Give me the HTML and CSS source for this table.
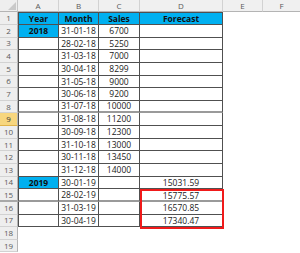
FILE: index.html
```html
<!DOCTYPE html>
<html>
<head>
<meta charset="utf-8">
<link rel="stylesheet" href="styles.css">
</head>
<body>
<div class="wrap">
<div class="sheet">
  <div class="corner"><svg class="tri" width="8" height="8" viewBox="0 0 8 8"><polygon points="8,0 8,8 0,8" fill="#c9c9c9"/></svg></div>
  <div class="ch">A</div><div class="ch">B</div><div class="ch">C</div><div class="ch">D</div><div class="ch">E</div><div class="ch last">F</div>

  <div class="rh">1</div>
  <div class="c b bl bt cy bold">Year</div><div class="c b bt cy bold">Month</div><div class="c b bt cy bold">Sales</div><div class="c b bt cy bold">Forecast</div><div class="c"></div><div class="c"></div>

  <div class="rh">2</div>
  <div class="c b bl cy bold">2018</div><div class="c b">31-01-18</div><div class="c b">6700</div><div class="c b"></div><div class="c"></div><div class="c"></div>

  <div class="rh">3</div>
  <div class="c b bl"></div><div class="c b">28-02-18</div><div class="c b">5250</div><div class="c b"></div><div class="c"></div><div class="c"></div>

  <div class="rh">4</div>
  <div class="c b bl"></div><div class="c b">31-03-18</div><div class="c b">7000</div><div class="c b"></div><div class="c"></div><div class="c"></div>

  <div class="rh">5</div>
  <div class="c b bl"></div><div class="c b">30-04-18</div><div class="c b">8299</div><div class="c b"></div><div class="c"></div><div class="c"></div>

  <div class="rh">6</div>
  <div class="c b bl"></div><div class="c b">31-05-18</div><div class="c b">9000</div><div class="c b"></div><div class="c"></div><div class="c"></div>

  <div class="rh">7</div>
  <div class="c b bl"></div><div class="c b">30-06-18</div><div class="c b">9200</div><div class="c b"></div><div class="c"></div><div class="c"></div>

  <div class="rh">8</div>
  <div class="c b bl hl"></div><div class="c b hl">31-07-18</div><div class="c b hl">10000</div><div class="c b hl"></div><div class="c"></div><div class="c"></div>

  <div class="rh sel">9</div>
  <div class="c b bl"></div><div class="c b">31-08-18</div><div class="c b">11200</div><div class="c b"></div><div class="c"></div><div class="c"></div>

  <div class="rh">10</div>
  <div class="c b bl"></div><div class="c b">30-09-18</div><div class="c b">12300</div><div class="c b"></div><div class="c"></div><div class="c"></div>

  <div class="rh">11</div>
  <div class="c b bl"></div><div class="c b">31-10-18</div><div class="c b">13000</div><div class="c b"></div><div class="c"></div><div class="c"></div>

  <div class="rh">12</div>
  <div class="c b bl"></div><div class="c b">30-11-18</div><div class="c b">13450</div><div class="c b"></div><div class="c"></div><div class="c"></div>

  <div class="rh">13</div>
  <div class="c b bl"></div><div class="c b">31-12-18</div><div class="c b">14000</div><div class="c b"></div><div class="c"></div><div class="c"></div>

  <div class="rh">14</div>
  <div class="c b bl cy bold">2019</div><div class="c b">30-01-19</div><div class="c b"></div><div class="c b">15031.59</div><div class="c"></div><div class="c"></div>

  <div class="rh rhl">15</div>
  <div class="c b bl hl"></div><div class="c b hl">28-02-19</div><div class="c b hl"></div><div class="c b hl in">15775.57</div><div class="c"></div><div class="c"></div>

  <div class="rh">16</div>
  <div class="c b bl"></div><div class="c b">31-03-19</div><div class="c b"></div><div class="c b">16570.85</div><div class="c"></div><div class="c"></div>

  <div class="rh">17</div>
  <div class="c b bl"></div><div class="c b">30-04-19</div><div class="c b"></div><div class="c b">17340.47</div><div class="c"></div><div class="c"></div>

  <div class="rh">18</div>
  <div class="c"></div><div class="c"></div><div class="c"></div><div class="c"></div><div class="c"></div><div class="c"></div>

  <div class="rh">19</div>
  <div class="c"></div><div class="c"></div><div class="c"></div><div class="c"></div><div class="c"></div><div class="c"></div>
</div>
<div class="redbox"></div>
</div>
</body>
</html>
```

FILE: styles.css
```css
* { box-sizing: border-box; }
html, body { margin: 0; padding: 0; background: #fff; }
body { width: 300px; height: 253px; overflow: hidden; }
.wrap { position: relative; width: 300px; height: 253px; }
.sheet {
  display: grid;
  grid-template-columns: 18px 41px 40px 41px 83px 40px 37px;
  grid-template-rows: 12.3px repeat(19, 12.65px);
  font-family: "Open Sans", "Liberation Sans", sans-serif;
  font-size: 8.5px;
  line-height: 1;
  color: #1a1a1a;
}
.corner {
  background: #eeeeee;
  border-right: 1px solid #c6c6c6;
  border-bottom: 1px solid #b4b4b4;
  position: relative;
}
.tri { position: absolute; right: 1px; bottom: 1px; }
.ch {
  background: #f0f0f0;
  border-right: 1px solid #d2d2d2;
  border-bottom: 1px solid #b4b4b4;
  color: #5a5a5a;
  font-size: 8px;
  display: flex; align-items: center; justify-content: center;
}
.ch.last { border-right: none; }
.rh {
  background: #eeeeee;
  border-right: 1px solid #b4b4b4;
  border-bottom: 1px solid #d2d2d2;
  color: #5a5a5a;
  font-size: 8px;
  display: flex; align-items: center; justify-content: center;
}
.rh.sel {
  background: #f7d67e;
  border-bottom-color: #e0b34a;
  color: #333;
}
.rh.rhl { border-bottom: 2px solid #a8a8a8; }
.c {
  display: flex; align-items: center; justify-content: center;
  white-space: nowrap;
  padding-top: 1px;
}
.c.in { padding-top: 3px; }
.b { border-right: 1px solid #505050; border-bottom: 1px solid #505050; }
.b.hl { border-bottom: 2px solid #9a9a9a; }
.bl { border-left: 1px solid #505050; }
.bt { border-top: 1px solid #505050; }
.cy { background: #00b0f0; }
.bold { font-weight: bold; color: #111; }
.redbox {
  position: absolute;
  left: 140px; top: 189px;
  width: 84px; height: 40px;
  border: 2px solid #f01a1a;
}
```
